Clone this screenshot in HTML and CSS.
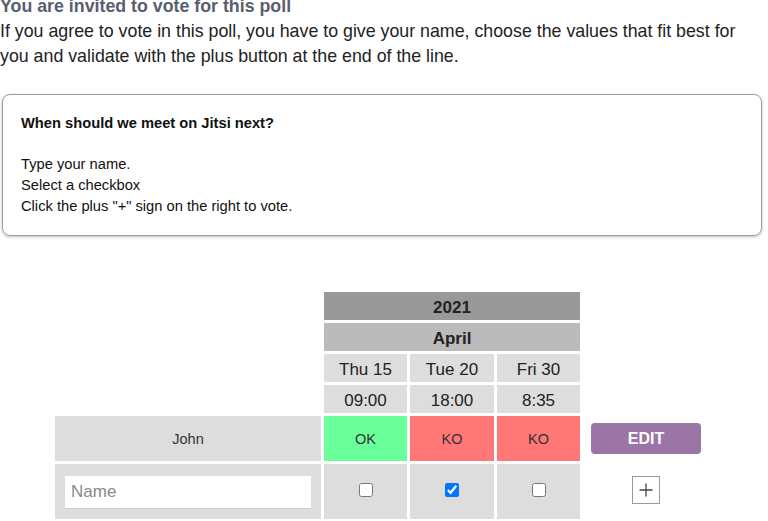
FILE: index.html
```html
<!DOCTYPE html>
<html lang="en">
<head>
	<title>Poll</title>
	<meta charset="utf-8">
	<link rel="stylesheet" href="styles.css">
</head>
<body>
	<div id="page">
		<h2 class="invite">You are invited to vote for this poll</h2>
		<p class="intro">If you agree to vote in this poll, you have to give your name, choose the values that fit best for you and validate with the plus button at the end of the line.</p>

		<div class="pollbox">
			<p class="question">When should we meet on Jitsi next?</p>
			<p class="help">Type your name.<br>Select a checkbox<br>Click the plus "+" sign on the right to vote.</p>
		</div>

		<table class="votes">
			<tr class="head">
				<td class="blank"></td>
				<th class="year" colspan="3">2021</th>
				<td class="blank"></td>
			</tr>
			<tr class="head">
				<td class="blank"></td>
				<th class="month" colspan="3">April</th>
				<td class="blank"></td>
			</tr>
			<tr class="head">
				<td class="blank"></td>
				<td class="day">Thu 15</td>
				<td class="day wide">Tue 20</td>
				<td class="day">Fri 30</td>
				<td class="blank"></td>
			</tr>
			<tr class="head">
				<td class="blank"></td>
				<td class="day">09:00</td>
				<td class="day wide">18:00</td>
				<td class="day">8:35</td>
				<td class="blank"></td>
			</tr>
			<tr class="voter">
				<td class="name">John</td>
				<td class="ok">OK</td>
				<td class="ko">KO</td>
				<td class="ko">KO</td>
				<td class="action"><button class="edit">EDIT</button></td>
			</tr>
			<tr class="newvote">
				<td class="name"><input type="text" placeholder="Name"></td>
				<td class="check"><input type="checkbox"></td>
				<td class="check"><input type="checkbox" checked></td>
				<td class="check"><input type="checkbox"></td>
				<td class="action">
					<button class="plus"><svg width="14" height="14" viewBox="0 0 14 14"><path d="M7 0.5v13M0.5 7h13" stroke="#444" stroke-width="1.3" fill="none"/></svg></button>
				</td>
			</tr>
		</table>
	</div>
</body>
</html>
```

FILE: styles.css
```css
body {
	margin: 0;
	padding: 0;
	font-family: "Liberation Sans", Arial, sans-serif;
	color: #222;
	background: white;
}

#page {
	width: 768px;
}

.invite {
	margin: -6px 0 0 0;
	font-size: 17.8px;
	line-height: 25px;
	color: #57606d;
}

.intro {
	margin: 0;
	font-size: 17.8px;
	line-height: 25px;
}

.pollbox {
	margin: 25px 6px 0 2px;
	padding: 18px 18px 18px;
	border: 1px solid #9c9c9c;
	border-radius: 8px;
	box-shadow: 0 1px 3px rgba(0,0,0,0.25);
	font-size: 14.7px;
	line-height: 21px;
	color: #111;
}

.pollbox p {
	margin: 0;
}

.pollbox .question {
	font-weight: bold;
	margin-bottom: 20px;
}

.votes {
	margin: 53px 0 0 52px;
	border-spacing: 3px;
	font-size: 17px;
	color: #222;
}

.votes td, .votes th {
	padding: 0;
	text-align: center;
}

.votes .head td, .votes .head th {
	height: 25px;
	padding-top: 3px;
}

.votes .blank {
	width: 266px;
}

.votes tr td.blank:last-child {
	width: 126px;
}

.year {
	background: #999999;
}

.month {
	background: #bbbbbb;
}

.day {
	background: #dddddd;
	width: 83px;
}

.day.wide {
	width: 84px;
}

.voter td {
	height: 45px;
	font-size: 14.5px;
	color: #333;
}

.voter .name {
	background: #dddddd;
}

.ok {
	background: #6bff9b;
}

.ko {
	background: #ff7777;
}

.action {
	width: 126px;
}

.edit {
	display: block;
	margin: 0 auto;
	width: 110px;
	height: 31px;
	border: none;
	border-radius: 4px;
	background: #9b75a6;
	color: white;
	font-family: "Liberation Sans", Arial, sans-serif;
	font-size: 16px;
	font-weight: bold;
}

.newvote td {
	height: 55px;
}

.newvote .name, .newvote .check {
	background: #dddddd;
}

.newvote .name input {
	display: block;
	margin: 1px auto 0;
	width: 246px;
	height: 33px;
	box-sizing: border-box;
	border: none;
	border-bottom: 1px solid #ccc;
	padding: 0 6px;
	font-family: "Liberation Sans", Arial, sans-serif;
	font-size: 17px;
	outline: none;
}

.newvote .name input::placeholder {
	color: #8a8a8a;
}

.check input {
	width: 14px;
	height: 14px;
	margin: 0;
}

.plus {
	display: block;
	margin: 0 auto 4px;
	width: 28px;
	height: 28px;
	padding: 0;
	background: white;
	border: 1px solid #999;
	border-radius: 0;
}

.plus svg {
	display: block;
	margin: 0 auto;
}
```
